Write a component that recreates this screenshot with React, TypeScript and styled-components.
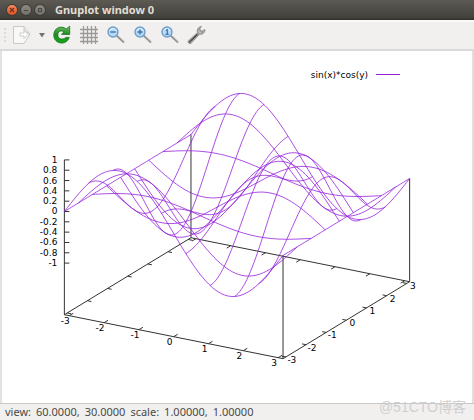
import React from "react";
import styled, { createGlobalStyle } from "styled-components";

const GlobalStyle = createGlobalStyle`
  * { box-sizing: border-box; }
  body { margin: 0; background: #f1f0ef; }
`;

const Window = styled.main`
  min-height: 100vh;
  display: flex;
  flex-direction: column;
  font-family: "Noto Sans", "Open Sans", sans-serif;
`;

const TitleBar = styled.header`
  height: 20px;
  padding: 0 7px;
  display: flex;
  align-items: center;
  gap: 4px;
  background: linear-gradient(#5c5a53, #43413c 88%, #2f2d29);
`;

const WindowButton = styled.button<{ $close?: boolean }>`
  width: 10px;
  height: 10px;
  padding: 0;
  flex: none;
  display: grid;
  place-items: center;
  border: 0;
  border-radius: 50%;
  color: #45433e;
  background: ${(p) =>
    p.$close ? "linear-gradient(#f58a66, #e2511f)" : "linear-gradient(#8b8981, #716f68)"};
  box-shadow: 0 0 0 1px #3d3a35;
`;

const Title = styled.h1`
  margin: 0 0 0 6px;
  font-size: 11px;
  line-height: 20px;
  font-weight: 700;
  color: #e2ded3;
`;

const ToolBar = styled.div`
  height: 31px;
  padding: 0 4px 1px;
  display: flex;
  align-items: center;
  gap: 6px;
  background: #f1f0ef;
  border-top: 2px solid #fafafa;
  border-bottom: 2px solid #dadad9;
`;

const Grip = styled.span`
  width: 2px;
  height: 14px;
  border-left: 2px dotted #dad9d7;
`;

const ToolButton = styled.button<{ $narrow?: boolean }>`
  width: ${(p) => (p.$narrow ? "8px" : "20px")};
  height: 20px;
  padding: 0;
  flex: none;
  border: 0;
  background: none;
  svg { display: block; width: 100%; height: 100%; }
`;

const Tools = styled.div`
  display: flex;
  gap: 7px;
`;

const Canvas = styled.section`
  flex: 1;
  min-height: 0;
  padding: 0;
  background: #fff;
  border-left: 2px solid #e3e2e1;
  border-right: 2px solid #dfdfde;
`;

const Plot = styled.svg`
  display: block;
  width: 100%;
  height: auto;
  text {
    font-family: "DejaVu Sans", sans-serif;
    font-size: 9px;
    fill: #000;
  }
`;

const StatusBar = styled.footer`
  position: relative;
  height: 17px;
  padding: 0 5px;
  display: flex;
  align-items: center;
  gap: 5px;
  font-size: 11px;
  line-height: 16px;
  color: #4c4a46;
  background: #f1f0ef;
  border-top: 1px solid #c9c8c7;
`;

const Watermark = styled.span`
  position: absolute;
  right: 8px;
  bottom: 5px;
  font-family: "Liberation Sans", "Noto Sans CJK SC", sans-serif;
  font-size: 14px;
  line-height: 16px;
  color: #cfcfcf;
`;

type Point = [number, number];
const PI = Math.PI;
const ISO_LINES = 10;
const SAMPLES = 72;
const ORIGIN: Point = [235, 144];
const Z_SCALE = 51.6;

// Projects a point of the plot volume on the drawing plane.
const project = (x: number, y: number, z: number): Point => [
  ORIGIN[0] + x * 34.8 + y * 20.15,
  ORIGIN[1] + x * 7 - y * 12.25 - z * Z_SCALE,
];

const toPath = (points: Point[]) =>
  "M" + points.map(([x, y]) => `${x.toFixed(2)} ${y.toFixed(2)}`).join("L");

const surface = (x: number, y: number) => project(x, y, Math.sin(x) * Math.cos(y));

const steps = (count: number) =>
  Array.from({ length: count }, (_, i) => -PI + (2 * PI * i) / (count - 1));

const surfaceLines = steps(ISO_LINES).flatMap((fixed) => [
  toPath(steps(SAMPLES).map((t) => surface(t, fixed))),
  toPath(steps(SAMPLES).map((t) => surface(fixed, t))),
]);

const BASE = -2;
const frame = [
  toPath([
    project(-PI, -PI, BASE),
    project(PI, -PI, BASE),
    project(PI, PI, BASE),
    project(-PI, PI, BASE),
  ]) + "Z",
  toPath([project(-PI, -PI, BASE), project(-PI, -PI, 1)]),
  toPath([project(PI, -PI, BASE), project(PI, -PI, 0)]),
  toPath([project(PI, PI, BASE), project(PI, PI, 0)]),
  toPath([project(-PI, PI, BASE), project(-PI, PI, 0)]),
];

const tick = ([x, y]: Point, dx: number, dy: number) => `M${x} ${y}l${dx} ${dy}`;
const axisValues = [-3, -2, -1, 0, 1, 2, 3];
const heights = [1, 0.8, 0.6, 0.4, 0.2, 0, -0.2, -0.4, -0.6, -0.8, -1];

const ticks = [
  ...axisValues.flatMap((v) => [
    tick(project(v, -PI, BASE), 4, -2.4),
    tick(project(v, PI, BASE), -4, 2.4),
    tick(project(-PI, v, BASE), 4, 0.8),
    tick(project(PI, v, BASE), -4, -0.8),
  ]),
  ...heights.map((v) => tick(project(-PI, -PI, v), 5, 0)),
];

function SurfacePlot() {
  return (
    <Plot viewBox="0 0 470 352" role="img" aria-label="Surface plot of sin(x)*cos(y)">
      <g fill="none" stroke="#333" strokeWidth="1">
        <path d={frame.join("")} />
        <path d={ticks.join("")} />
      </g>
      <path d={surfaceLines.join("")} fill="none" stroke="#9420dc" strokeWidth="0.8" />
      {heights.map((v) => {
        const [x, y] = project(-PI, -PI, v);
        return (
          <text key={v} x={x - 7} y={y + 3} textAnchor="end">
            {v}
          </text>
        );
      })}
      {axisValues.map((v) => {
        const [x, y] = project(v, -PI, BASE);
        return (
          <text key={v} x={x - 4} y={y + 8} textAnchor="middle">
            {v}
          </text>
        );
      })}
      {axisValues.map((v) => {
        const [x, y] = project(PI, v, BASE);
        return (
          <text key={v} x={x + 6} y={y + 6} textAnchor="middle">
            {v}
          </text>
        );
      })}
      <text x="366" y="27" textAnchor="end">
        sin(x)*cos(y)
      </text>
      <path d="M374 23.5H398" stroke="#9420dc" />
    </Plot>
  );
}

function Magnifier({ children }: { children: React.ReactNode }) {
  return (
    <svg viewBox="0 0 20 20" fill="none">
      <path d="M10.5 10.5L17.5 17" stroke="#c9c8c6" strokeWidth="2.4" strokeLinecap="round" />
      <path d="M11 11L17.5 17.2" stroke="#88888b" strokeWidth="1.1" strokeLinecap="round" />
      <circle cx="7" cy="7" r="5" fill="#b7d9f5" stroke="#6f9dc9" strokeWidth="1.4" />
      <path d="M3.5 6A3.7 3.7 0 0 1 10.4 6" stroke="#e6f4ff" />
      <g stroke="#3a76b0" strokeWidth="1.4">{children}</g>
    </svg>
  );
}

export default function App() {
  return (
    <>
      <GlobalStyle />
      <Window>
        <TitleBar>
          <WindowButton $close aria-label="Close">
            <svg width="8" height="8" viewBox="0 0 8 8" stroke="#70301b" strokeWidth="1.3">
              <path d="M2 2L6 6M6 2L2 6" />
            </svg>
          </WindowButton>
          <WindowButton aria-label="Minimize">
            <svg width="8" height="8" viewBox="0 0 8 8" stroke="currentColor">
              <path d="M2 4.5H6" />
            </svg>
          </WindowButton>
          <WindowButton aria-label="Maximize">
            <svg width="8" height="8" viewBox="0 0 8 8" fill="none" stroke="currentColor">
              <path d="M2.5 2.5H5.5V5.5H2.5Z" />
            </svg>
          </WindowButton>
          <Title>Gnuplot window 0</Title>
        </TitleBar>
        <ToolBar role="toolbar" aria-label="Plot tools">
          <Grip />
          <ToolButton aria-label="Export">
            <svg viewBox="0 0 20 20" fill="none">
              <path d="M1.5 1.5H12L18 9L12 18.5H1.5Z" fill="#f8f8f7" stroke="#c9c8c6" />
              <path d="M12 1.5V6L18 9" fill="#e6e5e3" stroke="#c9c8c6" />
              <path d="M8 8H12V5.5L16 9.5L12 13.5V11H8Z" fill="#fff" stroke="#c4c3c1" strokeWidth="0.8" />
            </svg>
          </ToolButton>
          <ToolButton $narrow aria-label="Export options">
            <svg viewBox="0 0 8 20">
              <path d="M1 8H7L4 12.5Z" fill="#777572" />
            </svg>
          </ToolButton>
          <Tools>
            <ToolButton aria-label="Replot">
              <svg viewBox="0 0 20 20" fill="none">
                <defs>
                  <linearGradient id="replot" x1="0" y1="0" x2="0" y2="1">
                    <stop offset="0" stopColor="#69bd60" />
                    <stop offset="0.5" stopColor="#218c24" />
                    <stop offset="1" stopColor="#13a51a" />
                  </linearGradient>
                </defs>
                <path
                  d="M14.2 4L17.7 1.2V9.4H9.6L12 6.7C8.8 4.8 5.8 6.5 5.8 10C5.8 14 10.5 15.5 14 12.4H17.3C15.7 16.6 12.3 18.5 9 18C4.6 17.6 1.7 14.2 1.8 10C1.9 3 9.1-0.2 14.2 4Z"
                  fill="url(#replot)"
                  stroke="#167419"
                  strokeWidth="0.8"
                />
              </svg>
            </ToolButton>
            <ToolButton aria-label="Toggle grid">
              <svg viewBox="0 0 20 20" stroke="#9a9997" strokeWidth="1.3">
                <path d="M4.5 1V19M8.5 1V19M12.5 1V19M16.5 1V19M1 4.5H19M1 8.5H19M1 12.5H19M1 16.5H19" />
              </svg>
            </ToolButton>
            <ToolButton aria-label="Previous zoom">
              <Magnifier>
                <path d="M4.3 7H9.7" />
              </Magnifier>
            </ToolButton>
            <ToolButton aria-label="Next zoom">
              <Magnifier>
                <path d="M4.5 7H9.5M7 4.5V9.5" />
              </Magnifier>
            </ToolButton>
            <ToolButton aria-label="Autoscale">
              <Magnifier>
                <path d="M5.8 5.5L7.3 4.8V9.6M5.5 9.4H8.7" strokeWidth="1.2" />
              </Magnifier>
            </ToolButton>
            <ToolButton aria-label="Settings">
              <svg viewBox="0 0 20 20">
                <path
                  d="M1.2 15.9L10.3 7.7C9.5 4.8 11.2 1.9 14.6 1.3L12.8 3.9L14.7 6.2L18 4.4C18.2 7.6 15.4 9.9 12.3 9.4L4 18.4C2.6 19.5 0.3 17.6 1.2 15.9Z"
                  fill="#a3a2a0"
                  stroke="#7d7c7a"
                  strokeWidth="0.6"
                />
                <path d="M2.6 16.9L10 9.8" stroke="#444" strokeWidth="1.3" strokeLinecap="round" />
                <path d="M11.3 6.3L13.9 8.2" stroke="#d6d5d3" strokeWidth="1" />
              </svg>
            </ToolButton>
          </Tools>
        </ToolBar>
        <Canvas>
          <SurfacePlot />
        </Canvas>
        <StatusBar>
          <span>view:</span>
          <span>60.0000,</span>
          <span>30.0000</span>
          <span>scale:</span>
          <span>1.00000,</span>
          <span>1.00000</span>
          <Watermark>@51CTO博客</Watermark>
        </StatusBar>
      </Window>
    </>
  );
}
